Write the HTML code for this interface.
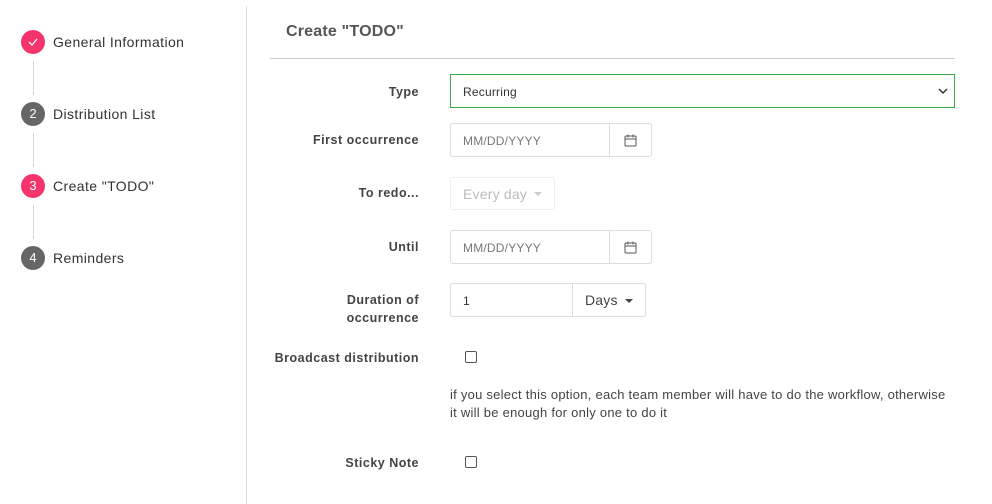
<!DOCTYPE html>
<html><head><meta charset="utf-8"><style>
body{margin:0;width:992px;height:504px;background:#fff;font-family:"Liberation Sans",sans-serif;color:#333;position:relative;overflow:hidden}
.a{position:absolute}
.c{position:absolute;left:21px;width:24px;height:24px;border-radius:50%;color:#fff;font-size:13px;text-align:center;line-height:24px}
.st{position:absolute;left:53px;font-size:14px;color:#333;letter-spacing:0.4px}
.ln{position:absolute;left:33px;width:1px;height:34px;background:#d5d5d5}
.lb{position:absolute;right:573px;font-size:12.5px;font-weight:bold;color:#444;text-align:right;line-height:18px;letter-spacing:0.5px}
.bx{position:absolute;border:1px solid #ddd;border-radius:3px;box-sizing:border-box;font-size:12px;color:#777;line-height:34px;padding-left:12px;letter-spacing:0.2px}
.cb{position:absolute;left:465px;width:12px;height:12px;border:1px solid #555;border-radius:2px;box-sizing:border-box}
</style></head><body>
<div class="c" style="top:30px;background:#f5346d"><svg width="12" height="10" viewBox="0 0 12 10" style="margin-top:7px"><path d="M2 5 L5 8 L10 2" stroke="#fff" stroke-width="1.3" fill="none"/></svg></div>
<div class="st" style="top:34px">General Information</div>
<div class="ln" style="top:61px"></div>
<div class="c" style="top:102px;background:#666">2</div>
<div class="st" style="top:106px">Distribution List</div>
<div class="ln" style="top:133px"></div>
<div class="c" style="top:174px;background:#f5346d">3</div>
<div class="st" style="top:178px">Create "TODO"</div>
<div class="ln" style="top:205px"></div>
<div class="c" style="top:246px;background:#666">4</div>
<div class="st" style="top:250px">Reminders</div>
<div class="a" style="left:246px;top:6px;width:1px;height:498px;background:#ddd"></div>

<div class="a" style="left:286px;top:23px;font-size:16px;font-weight:bold;color:#555;letter-spacing:0.2px">Create "TODO"</div>
<div class="a" style="left:270px;top:58px;width:685px;height:1px;background:#ccc"></div>

<div class="lb" style="top:83px">Type</div>
<div class="bx" style="left:450px;top:74px;width:505px;height:34px;border-color:#3aa845;border-radius:0;color:#333">Recurring<svg class="a" style="right:6px;top:12px" width="10" height="8" viewBox="0 0 10 8"><path d="M1 2 L5 6 L9 2" stroke="#333" stroke-width="1.5" fill="none"/></svg></div>

<div class="lb" style="top:131px">First occurrence</div>
<div class="bx" style="left:450px;top:123px;width:160px;height:34px;border-radius:3px 0 0 3px">MM/DD/YYYY</div>
<div class="bx" style="left:609px;top:123px;width:43px;height:34px;border-radius:0 3px 3px 0"><svg class="a" style="left:14px;top:10px" width="13" height="13" viewBox="0 0 13 13"><rect x="1" y="2" width="11" height="10" rx="1" stroke="#555" fill="none"/><path d="M1 5h11M4 0.5v3M9 0.5v3" stroke="#555"/></svg></div>

<div class="lb" style="top:184px">To redo...</div>
<div class="bx" style="left:450px;top:177px;width:105px;height:33px;border-color:#eee;color:#bbb;font-size:14px;line-height:32px">Every day<span class="a" style="left:83px;top:14px;border:4px solid transparent;border-top-color:#ccc;border-bottom:0"></span></div>

<div class="lb" style="top:238px">Until</div>
<div class="bx" style="left:450px;top:230px;width:160px;height:34px;border-radius:3px 0 0 3px">MM/DD/YYYY</div>
<div class="bx" style="left:609px;top:230px;width:43px;height:34px;border-radius:0 3px 3px 0"><svg class="a" style="left:14px;top:10px" width="13" height="13" viewBox="0 0 13 13"><rect x="1" y="2" width="11" height="10" rx="1" stroke="#555" fill="none"/><path d="M1 5h11M4 0.5v3M9 0.5v3" stroke="#555"/></svg></div>

<div class="lb" style="top:291px">Duration of<br>occurrence</div>
<div class="bx" style="left:450px;top:283px;width:123px;height:34px;border-radius:3px 0 0 3px;color:#333">1</div>
<div class="bx" style="left:572px;top:283px;width:74px;height:34px;border-radius:0 3px 3px 0;color:#444;font-size:14px;line-height:33px">Days<span class="a" style="left:52px;top:15px;border:4px solid transparent;border-top-color:#444;border-bottom:0"></span></div>

<div class="lb" style="top:349px">Broadcast distribution</div>
<div class="cb" style="top:351px"></div>
<div class="a" style="left:450px;top:386px;font-size:13px;color:#444;line-height:18px;letter-spacing:0.25px;white-space:nowrap">if you select this option, each team member will have to do the workflow, otherwise<br>it will be enough for only one to do it</div>

<div class="lb" style="top:454px">Sticky Note</div>
<div class="cb" style="top:456px"></div>
</body></html>
